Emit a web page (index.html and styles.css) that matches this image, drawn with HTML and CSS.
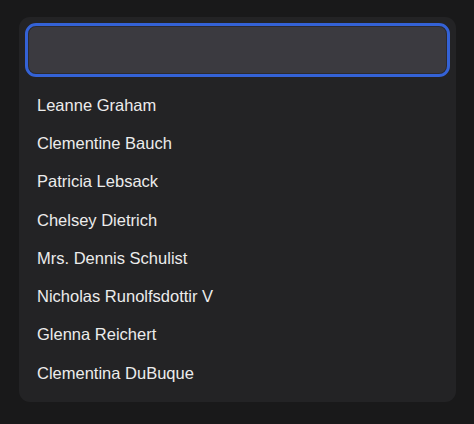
FILE: index.html
```html
<!DOCTYPE html>
<html>
<head>
<meta charset="utf-8">
<link rel="stylesheet" href="styles.css">
</head>
<body>
<div class="panel">
  <input class="search" type="text" aria-label="Search users">
  <ul class="list">
    <li class="item">Leanne Graham</li>
    <li class="item">Clementine Bauch</li>
    <li class="item">Patricia Lebsack</li>
    <li class="item">Chelsey Dietrich</li>
    <li class="item">Mrs. Dennis Schulist</li>
    <li class="item">Nicholas Runolfsdottir V</li>
    <li class="item">Glenna Reichert</li>
    <li class="item">Clementina DuBuque</li>
  </ul>
</div>
</body>
</html>
```
FILE: styles.css
```css
html, body {
  margin: 0;
  padding: 0;
  background: #19191a;
  font-family: "Liberation Sans", Arial, Helvetica, sans-serif;
}
body {
  padding: 17px 18px 0 19px;
}
.panel {
  width: 437px;
  box-sizing: border-box;
  background: #232325;
  border-radius: 11px;
  padding: 9px 9px 10px 9px;
}
.search {
  display: block;
  box-sizing: border-box;
  width: 419px;
  height: 48px;
  margin: 0;
  background: #3b3a40;
  border: 1px solid #2c2b30;
  border-radius: 8px;
  outline: 3px solid #3462d6;
  outline-offset: 0;
  color: #eee;
  font: inherit;
}
.list {
  list-style: none;
  margin: 12px 0 0 0;
  padding: 0;
}
.item {
  height: 38.3px;
  display: flex;
  align-items: center;
  padding-left: 9px;
  color: #ececec;
  font-size: 16.5px;
}
```
